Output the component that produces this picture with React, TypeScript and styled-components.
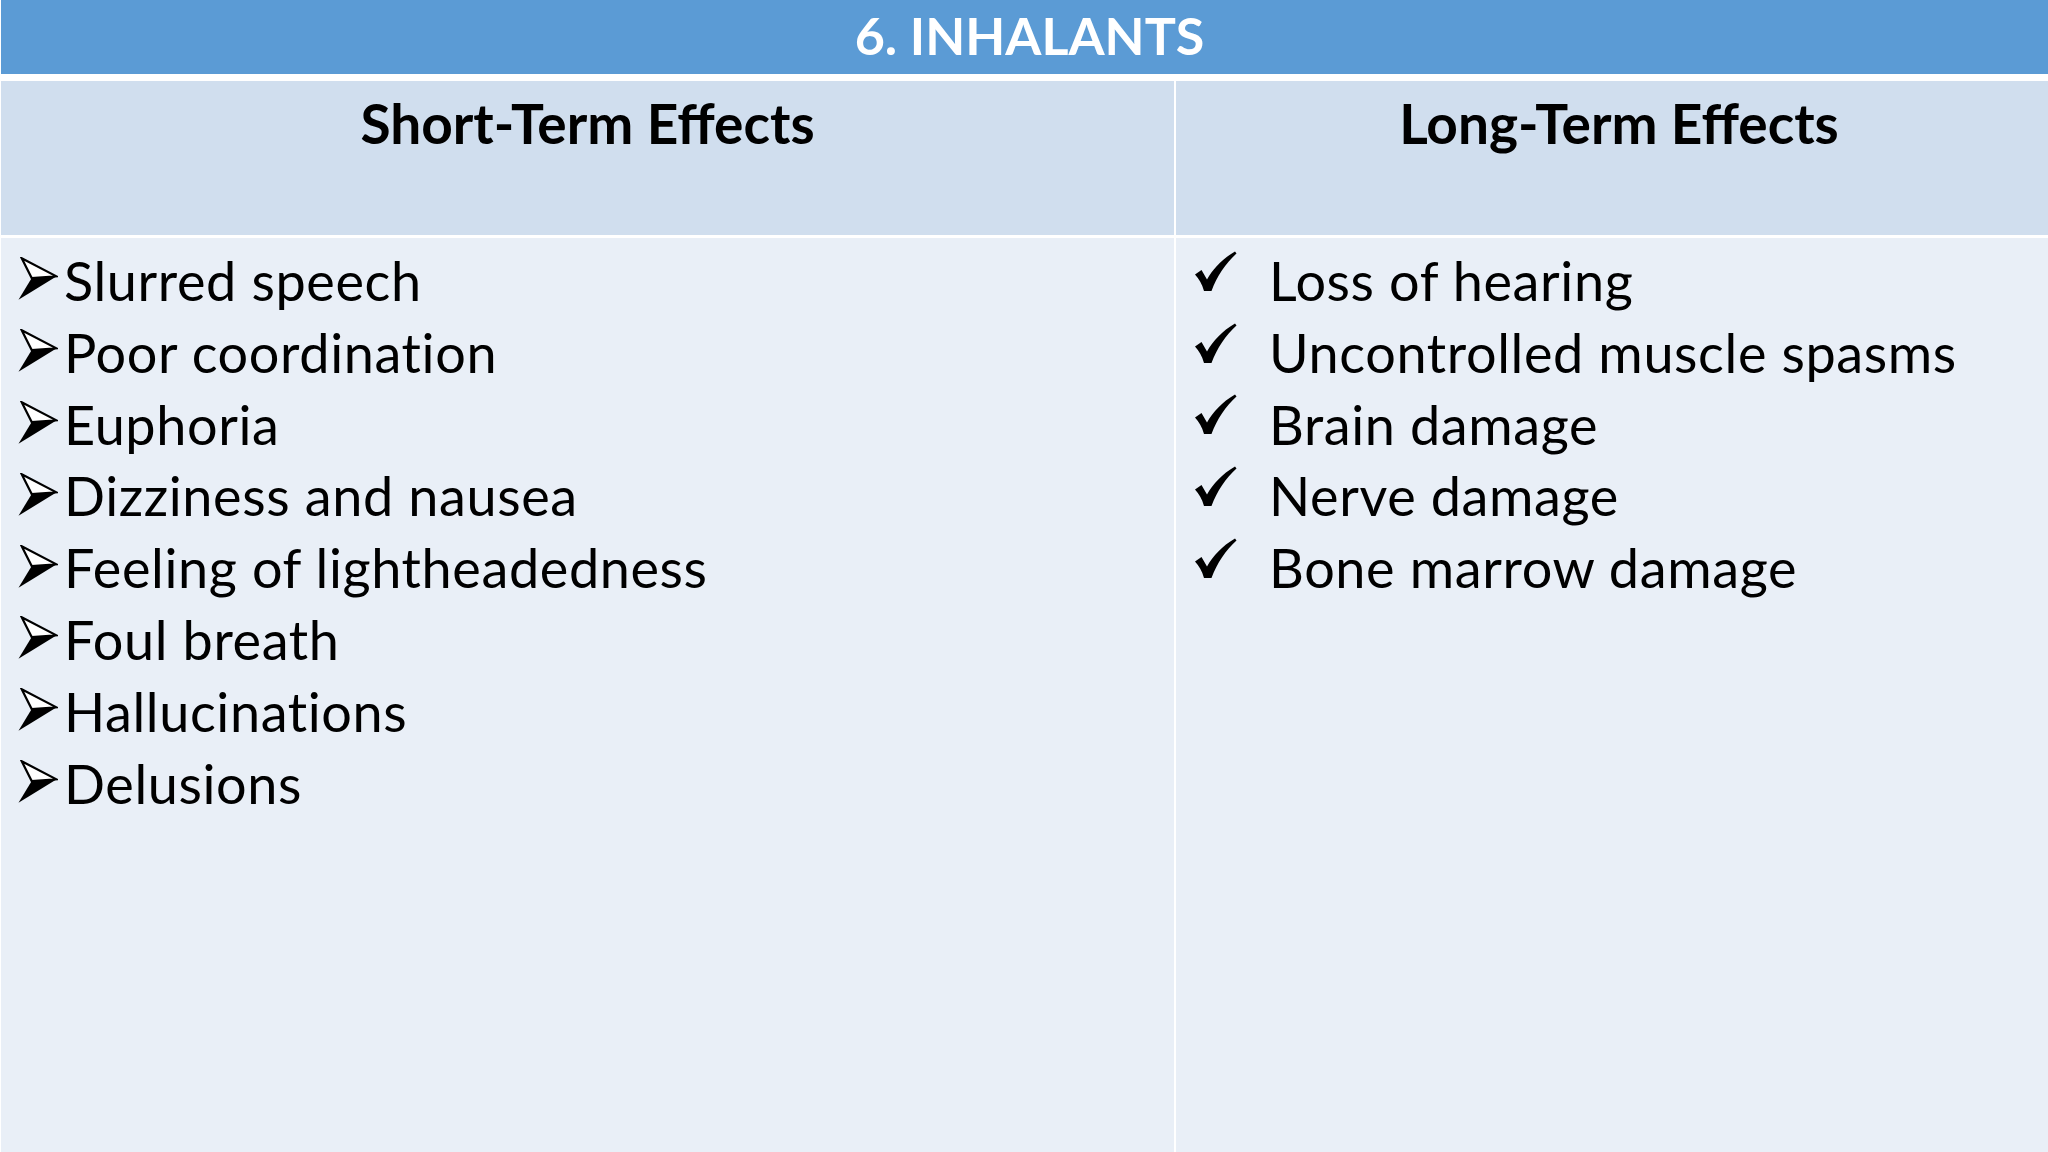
import React from "react";
import styled, { createGlobalStyle } from "styled-components";

const Global = createGlobalStyle`
  html, body { margin: 0; padding: 0; background: #ffffff; }
  body { font-family: "Lato", "Open Sans", sans-serif; color: #000; }
`;

const Table = styled.div`
  display: grid;
  grid-template-columns: 1173px 1fr;
  grid-template-rows: 74px 161px 1fr;
  column-gap: 2px;
  height: 1152px;
  padding-left: 1px;
  box-sizing: border-box;
  background: #ffffff;
`;

const TitleBar = styled.div`
  grid-column: 1 / span 2;
  background: #5b9bd5;
  color: #ffffff;
  font-weight: 700;
  font-size: 52px;
  line-height: 70px;
  text-align: center;
  padding-left: 10px;
  box-sizing: border-box;
`;

const HeaderCell = styled.div<{ $shift?: number }>`
  margin-top: 7px;
  background: #d0deee;
  font-weight: 700;
  font-size: 55px;
  line-height: 66px;
  text-align: center;
  padding-top: 9px;
  box-sizing: border-box;
  padding-left: ${(p) => p.$shift ?? 0}px;
`;

const BodyCell = styled.div`
  margin-top: 3px;
  background: #e9eff7;
  padding-top: 7px;
  box-sizing: border-box;
  display: flex;
  flex-direction: column;
`;

const Item = styled.div<{ $pad: number; $gap: number }>`
  display: flex;
  align-items: center;
  height: 71.8px;
  padding-left: ${(p) => p.$pad}px;
  gap: ${(p) => p.$gap}px;
  font-size: 54px;
  letter-spacing: 0.62px;
  line-height: 71.8px;
  white-space: nowrap;
`;

const ArrowIcon = styled.svg`
  flex: none;
  width: 40px;
  height: 44px;
  margin-top: -3px;
`;

const CheckIcon = styled.svg`
  flex: none;
  width: 44px;
  height: 44px;
  margin-bottom: 18px;
`;

const Arrow = () => (
  <ArrowIcon viewBox="0 0 40 44">
    <polygon points="3.7,1.2 38.4,19.3 13.7,21" fill="#ffffff" stroke="#000" strokeWidth="2.2" strokeLinejoin="miter" />
    <polygon points="13.7,21 38.7,19.3 0.5,42.7" fill="#000" />
  </ArrowIcon>
);

const Check = () => (
  <CheckIcon viewBox="0 0 44 44">
    <path d="M1 24.5 L7.5 20 L13 29.5 C19 19 28 9 41 1.5 L42.5 3.5 C32 13 23 26 17.5 41 L10 41 C8 34 5 29 1 24.5 Z" fill="#000" />
  </CheckIcon>
);

const shortTerm = [
  "Slurred speech",
  "Poor coordination",
  "Euphoria",
  "Dizziness and nausea",
  "Feeling of lightheadedness",
  "Foul breath",
  "Hallucinations",
  "Delusions",
];

const longTerm = [
  "Loss of hearing",
  "Uncontrolled muscle spasms",
  "Brain damage",
  "Nerve damage",
  "Bone marrow damage",
];

export default function App() {
  return (
    <>
      <Global />
      <Table>
        <TitleBar>6. INHALANTS</TitleBar>
        <HeaderCell>Short-Term Effects</HeaderCell>
        <HeaderCell $shift={14}>Long-Term Effects</HeaderCell>
        <BodyCell>
          {shortTerm.map((t) => (
            <Item key={t} $pad={17} $gap={6}>
              <Arrow />
              <span>{t}</span>
            </Item>
          ))}
        </BodyCell>
        <BodyCell>
          {longTerm.map((t) => (
            <Item key={t} $pad={18} $gap={31}>
              <Check />
              <span>{t}</span>
            </Item>
          ))}
        </BodyCell>
      </Table>
    </>
  );
}
